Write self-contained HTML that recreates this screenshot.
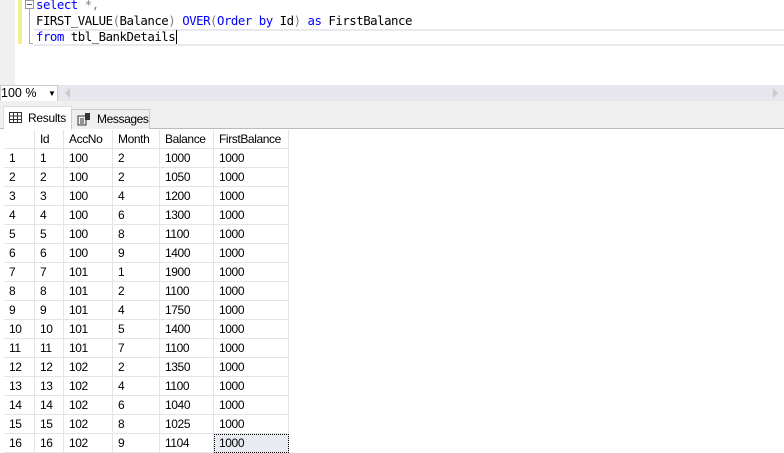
<!DOCTYPE html>
<html><head><style>
body{margin:0;width:784px;height:447px;overflow:hidden;background:#fff;position:relative;font-family:"Liberation Sans",sans-serif}
.a{position:absolute}
.code{font-family:"DejaVu Sans Mono","Liberation Mono",monospace;font-size:12.4px;letter-spacing:-0.5px;white-space:pre;left:36px;color:#000}
.k{color:#0000ff}.g{color:#808080}.m{color:#ff00ff}
table{border-collapse:collapse;font-size:12px;color:#000;letter-spacing:-0.4px}
td{height:18px;padding:0 0 0 5px;border-right:1px solid #e4e4e4;border-bottom:1px solid #e4e4e4;vertical-align:middle;line-height:18px}
</style></head><body>
<div class="a" style="left:0;top:0;width:15px;height:85px;background:#f0f0f0"></div>
<div class="a" style="left:18px;top:0;width:4px;height:44px;background:#f5ed91"></div>
<div class="a" style="left:25px;top:0;width:7px;height:7px;border:1px solid #999;background:#fff"></div>
<div class="a" style="left:27px;top:4px;width:5px;height:1px;background:#555"></div>
<div class="a" style="left:29px;top:9px;width:1px;height:35px;background:#aaa"></div>
<div class="a" style="left:29px;top:43px;width:4px;height:1px;background:#aaa"></div>
<div class="a" style="left:34px;top:29px;width:750px;height:13px;border-top:2px solid #e8e8ee;border-bottom:2px solid #e8e8ee"></div>
<div class="a code" style="top:-3px"><span class="k">select</span> <span class="g">*,</span></div>
<div class="a code" style="top:13px">FIRST_VALUE<span class="g">(</span>Balance<span class="g">)</span> <span class="k">OVER</span><span class="g">(</span><span class="k">Order by</span> Id<span class="g">)</span> <span class="k">as</span> FirstBalance</div>
<div class="a code" style="top:29px"><span class="k">from</span> tbl_BankDetails</div>
<div class="a" style="left:176px;top:30px;width:1px;height:14px;background:#000"></div>
<div class="a" style="left:0;top:85px;width:784px;height:16px;background:#e6e6ec"></div>
<div class="a" style="left:0;top:85px;width:56px;height:15px;background:#fff;border:1px solid #ccc;font-size:12.5px;line-height:15px">100 %<span style="position:absolute;left:47px;top:0;font-size:8px">▼</span></div>
<div class="a" style="left:65px;top:88px;width:0;height:0;border-top:5px solid transparent;border-bottom:5px solid transparent;border-right:5px solid #ccc"></div>
<div class="a" style="left:773px;top:88px;width:0;height:0;border-top:5px solid transparent;border-bottom:5px solid transparent;border-left:5px solid #ccc"></div>
<div class="a" style="left:0;top:101px;width:784px;height:27px;background:#efefef;border-bottom:1px solid #bbb"></div>
<div class="a" style="left:3px;top:106px;width:67px;height:23px;background:#fff;border:1px solid #ddd;border-bottom:none;font-size:12px;letter-spacing:-0.3px;line-height:22px">
<svg class="a" style="left:5px;top:5px" width="13" height="11"><rect x="0.5" y="0.5" width="12" height="10" fill="none" stroke="#333"/><path d="M0 4h13M0 7.5h13M4.5 0v11M8.5 0v11" stroke="#333"/></svg>
<span style="position:absolute;left:24px">Results</span></div>
<div class="a" style="left:71px;top:109px;width:77px;height:19px;background:#efefef;border:1px solid #ccc;border-bottom:none;font-size:12px;letter-spacing:-0.4px;line-height:19px">
<svg class="a" style="left:5px;top:3px" width="14" height="13"><path d="M1 3h8v9H1z" fill="none" stroke="#333"/><path d="M3 6h4M3 8h4M3 10h4" stroke="#333"/><rect x="8" y="0" width="5" height="7" fill="#333"/></svg>
<span style="position:absolute;left:25px">Messages</span></div>
<table class="a" style="left:4px;top:130px">
<tr><td style="width:25px"></td><td style="width:23px">Id</td><td style="width:43px">AccNo</td><td style="width:41px">Month</td><td style="width:48px">Balance</td><td style="width:69px">FirstBalance</td></tr>
<tr><td>1</td><td>1</td><td>100</td><td>2</td><td>1000</td><td>1000</td></tr>
<tr><td>2</td><td>2</td><td>100</td><td>2</td><td>1050</td><td>1000</td></tr>
<tr><td>3</td><td>3</td><td>100</td><td>4</td><td>1200</td><td>1000</td></tr>
<tr><td>4</td><td>4</td><td>100</td><td>6</td><td>1300</td><td>1000</td></tr>
<tr><td>5</td><td>5</td><td>100</td><td>8</td><td>1100</td><td>1000</td></tr>
<tr><td>6</td><td>6</td><td>100</td><td>9</td><td>1400</td><td>1000</td></tr>
<tr><td>7</td><td>7</td><td>101</td><td>1</td><td>1900</td><td>1000</td></tr>
<tr><td>8</td><td>8</td><td>101</td><td>2</td><td>1100</td><td>1000</td></tr>
<tr><td>9</td><td>9</td><td>101</td><td>4</td><td>1750</td><td>1000</td></tr>
<tr><td>10</td><td>10</td><td>101</td><td>5</td><td>1400</td><td>1000</td></tr>
<tr><td>11</td><td>11</td><td>101</td><td>7</td><td>1100</td><td>1000</td></tr>
<tr><td>12</td><td>12</td><td>102</td><td>2</td><td>1350</td><td>1000</td></tr>
<tr><td>13</td><td>13</td><td>102</td><td>4</td><td>1100</td><td>1000</td></tr>
<tr><td>14</td><td>14</td><td>102</td><td>6</td><td>1040</td><td>1000</td></tr>
<tr><td>15</td><td>15</td><td>102</td><td>8</td><td>1025</td><td>1000</td></tr>
<tr><td>16</td><td>16</td><td>102</td><td>9</td><td>1104</td><td style="background:#e8ecf2;outline:1px dotted #000;outline-offset:-1px">1000</td></tr>
</table>
</body></html>
